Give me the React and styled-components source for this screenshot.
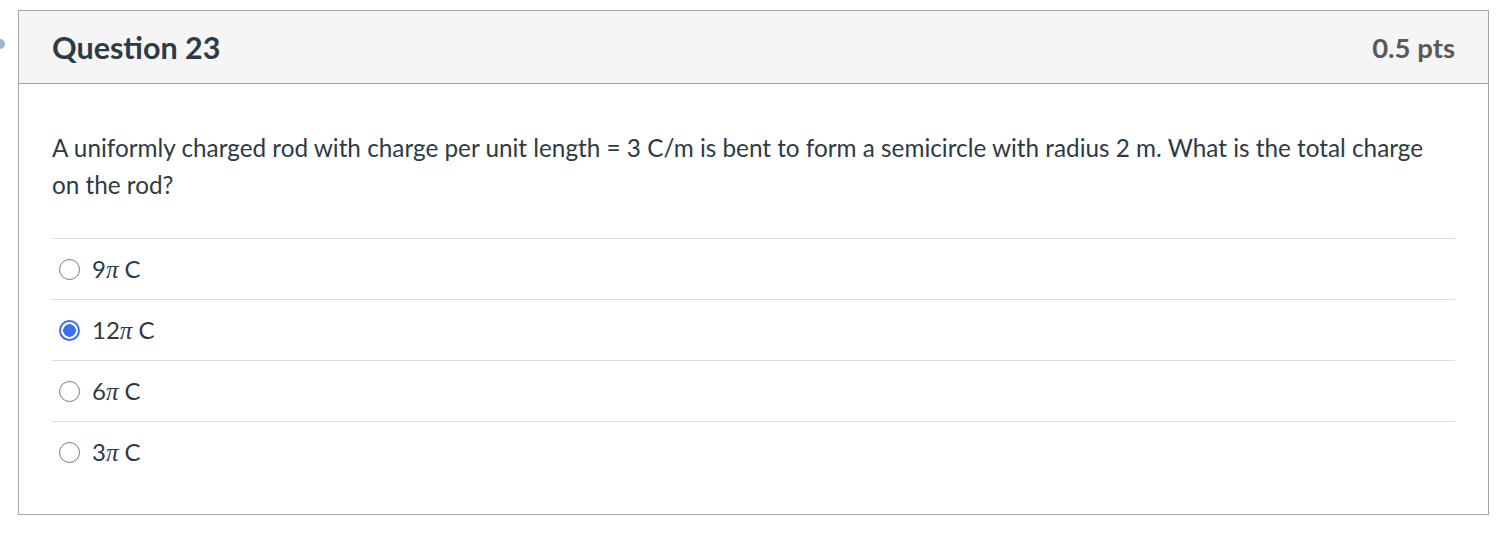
import React from "react";
import styled, { createGlobalStyle } from "styled-components";

const GlobalStyle = createGlobalStyle`
  html, body {
    margin: 0;
    padding: 0;
    background: #ffffff;
    font-family: Lato, "Liberation Sans", sans-serif;
    color: #2d3b45;
  }
`;

const answers = [
  { num: "9", selected: false },
  { num: "12", selected: true },
  { num: "6", selected: false },
  { num: "3", selected: false },
];

function App() {
  return (
    <>
      <GlobalStyle />
      <Page>
        <SideMarker />
        <QuestionCard>
          <CardHeader>
            <Title>Question 23</Title>
            <Points>0.5 pts</Points>
          </CardHeader>
          <CardBody>
            <QuestionText>
              A uniformly charged rod with charge per unit length = 3 C/m is bent to form a
              semicircle with radius 2 m. What is the total charge on the rod?
            </QuestionText>
            <AnswerList>
              {answers.map((a) => (
                <AnswerRow key={a.num}>
                  <Radio selected={a.selected} />
                  <AnswerLabel>
                    {a.num}
                    <Pi>π</Pi> C
                  </AnswerLabel>
                </AnswerRow>
              ))}
            </AnswerList>
          </CardBody>
        </QuestionCard>
      </Page>
    </>
  );
}

const Page = styled.div`
  position: relative;
  padding: 10px 0 0 18px;
  width: 1471px;
`;

const SideMarker = styled.span`
  position: absolute;
  left: -5px;
  top: 39px;
  width: 10px;
  height: 10px;
  border-radius: 50%;
  background: #9fb4cf;
`;

const QuestionCard = styled.div`
  border: 1px solid #a5a5a5;
  background: #ffffff;
`;

const CardHeader = styled.div`
  display: flex;
  align-items: center;
  justify-content: space-between;
  height: 72px;
  padding: 0 33px;
  background: #f5f5f5;
  border-bottom: 1px solid #a5a5a5;
`;

const Title = styled.h2`
  margin: 0;
  font-size: 30.5px;
  font-weight: 700;
  color: #2d3b45;
`;

const Points = styled.div`
  font-size: 27.5px;
  font-weight: 700;
  color: #595959;
`;

const CardBody = styled.div`
  padding: 45px 33px 32px;
`;

const QuestionText = styled.p`
  margin: 0 0 35px;
  max-width: 1390px;
  font-size: 24.3px;
  line-height: 37px;
  color: #2d3b45;
`;

const AnswerList = styled.div`
  display: flex;
  flex-direction: column;
`;

const AnswerRow = styled.div`
  display: flex;
  align-items: center;
  gap: 12px;
  height: 60px;
  padding-left: 7px;
  border-top: 1px solid #dddddd;
`;

const Radio = styled.span`
  box-sizing: border-box;
  flex: none;
  width: 21px;
  height: 21px;
  border-radius: 50%;
  border: ${(p) => (p.selected ? "2px solid #3a6ff2" : "1.5px solid #777777")};
  background: ${(p) =>
    p.selected ? "radial-gradient(circle, #3a6ff2 0 6px, #ffffff 6.5px)" : "#ffffff"};
`;

const AnswerLabel = styled.span`
  font-size: 24px;
  color: #2d3b45;
`;

const Pi = styled.span`
  font-family: "Liberation Serif", "DejaVu Serif", serif;
  font-style: italic;
  font-size: 25px;
`;

export default App;
